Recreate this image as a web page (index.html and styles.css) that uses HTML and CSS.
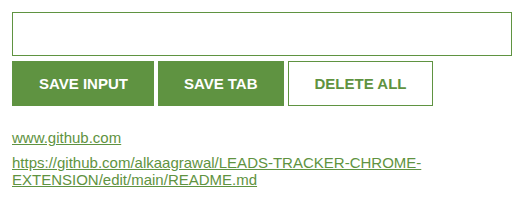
FILE: index.html
```html
<!DOCTYPE html>
<html lang="en">
<head>
<meta charset="utf-8">
<title>Leads Tracker</title>
<link rel="stylesheet" href="styles.css">
</head>
<body>
<main class="app">
  <input class="lead-input" type="text" aria-label="Lead">
  <div class="actions">
    <button class="btn btn-primary btn-wide">SAVE INPUT</button>
    <button class="btn btn-primary">SAVE TAB</button>
    <button class="btn btn-outline">DELETE ALL</button>
  </div>
  <ul class="leads">
    <li><a class="lead-link" href="#">www.github.com</a></li>
    <li><a class="lead-link" href="#">https://github.com/alkaagrawal/LEADS-TRACKER-CHROME-EXTENSION/edit/main/README.md</a></li>
  </ul>
</main>
</body>
</html>
```
FILE: styles.css
```css
html, body {
  background: #ffffff;
}

body {
  margin: 0;
  padding: 12px 10px 12px 12px;
  font-family: "Liberation Sans", Arial, sans-serif;
}

.app {
  width: 500px;
}

.lead-input {
  display: block;
  width: 100%;
  height: 44px;
  box-sizing: border-box;
  margin: 0 0 5px;
  padding: 10px;
  border: 1px solid #5f9341;
  outline: none;
  font: 15px "Liberation Sans", Arial, sans-serif;
}

.actions {
  display: flex;
  gap: 4px;
}

.btn {
  height: 45px;
  box-sizing: border-box;
  padding: 0 26px;
  border: none;
  font: bold 15px "Liberation Sans", Arial, sans-serif;
  cursor: pointer;
}

.btn-wide {
  padding: 0 26px 0 27px;
}

.btn-primary {
  background: #5f9341;
  color: #ffffff;
}

.btn-outline {
  background: #ffffff;
  color: #5f9341;
  border: 1px solid #5f9341;
}

.leads {
  list-style: none;
  margin: 23px 0 0;
  padding: 0;
  font-size: 15px;
  line-height: 17px;
}

.leads li + li {
  margin-top: 8px;
}

.lead-link {
  color: #5f9341;
}
```
